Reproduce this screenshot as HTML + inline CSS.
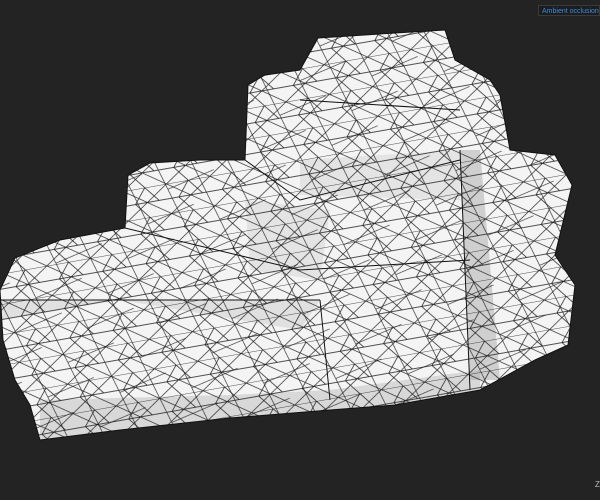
<!DOCTYPE html>
<html><head><style>
html,body{margin:0;padding:0;background:#232323;width:600px;height:500px;overflow:hidden;font-family:"Liberation Sans",sans-serif}
.lbl{position:absolute;left:538px;top:5px;width:62px;height:11px;border:1px solid #3a3a3a;background:#1d1d1d;color:#3d8be0;font-size:7px;line-height:11px;padding-left:3px;box-sizing:border-box}
.z{position:absolute;left:595px;top:480px;color:#bbb;font-size:8px}
</style></head><body>
<svg width="600" height="500" style="position:absolute;left:0;top:0">
<defs>
<pattern id="tri" width="44" height="30" patternUnits="userSpaceOnUse" patternTransform="rotate(-10)">
<path d="M0 0L44 0M0 15L44 15M0 0L22 15L0 30M22 15L44 0M22 15L44 30M22 0L10 15L22 30M22 0L34 15" stroke="#1a1a1a" stroke-width="0.7" fill="none"/>
</pattern>
<pattern id="tri2" width="60" height="40" patternUnits="userSpaceOnUse" patternTransform="rotate(30)">
<path d="M0 0L60 40M30 0L0 40" stroke="#1a1a1a" stroke-width="0.6" fill="none"/>
</pattern>
<clipPath id="c"><path id="s" d="M0 290L15 258L60 240L125 228L128 175L150 163L200 160L245 160L248 85L265 75L300 70L318 38L395 33L445 30L455 60L490 80L500 95L510 150L555 155L572 185L555 255L575 285L568 345L535 360L480 390L395 405L330 410L230 418L120 430L40 440L30 405L15 380L3 340Z"/></clipPath>
</defs>
<g clip-path="url(#c)">
<rect width="600" height="500" fill="#f4f4f4"/>
<path d="M0 320L120 300L300 330L320 300L0 300Z" fill="#ccc" opacity=".5"/>
<path d="M40 400L230 395L330 390L480 370L480 420L40 445Z" fill="#bbb" opacity=".5"/>
<path d="M300 160L460 150L460 200L300 195Z" fill="#d8d8d8" opacity=".6"/>
<path d="M245 200L330 210L320 280L250 270Z" fill="#ccc" opacity=".4"/>
<path d="M460 150L470 380L500 380L480 150Z" fill="#aaa" opacity=".5"/>
<rect width="600" height="500" fill="url(#tri)"/>
<rect width="600" height="500" fill="url(#tri2)"/>
<path d="M125 228L300 270L470 260M245 160L300 200L460 160M300 100L460 110M320 300L330 400M460 150L470 390M0 300L250 300L320 300" stroke="#111" stroke-width="1" fill="none"/>
</g>
<use href="#s" fill="none" stroke="#111" stroke-width="1"/>
</svg>
<div class="lbl">Ambient occlusion</div>
<div class="z">Z</div>
</body></html>
